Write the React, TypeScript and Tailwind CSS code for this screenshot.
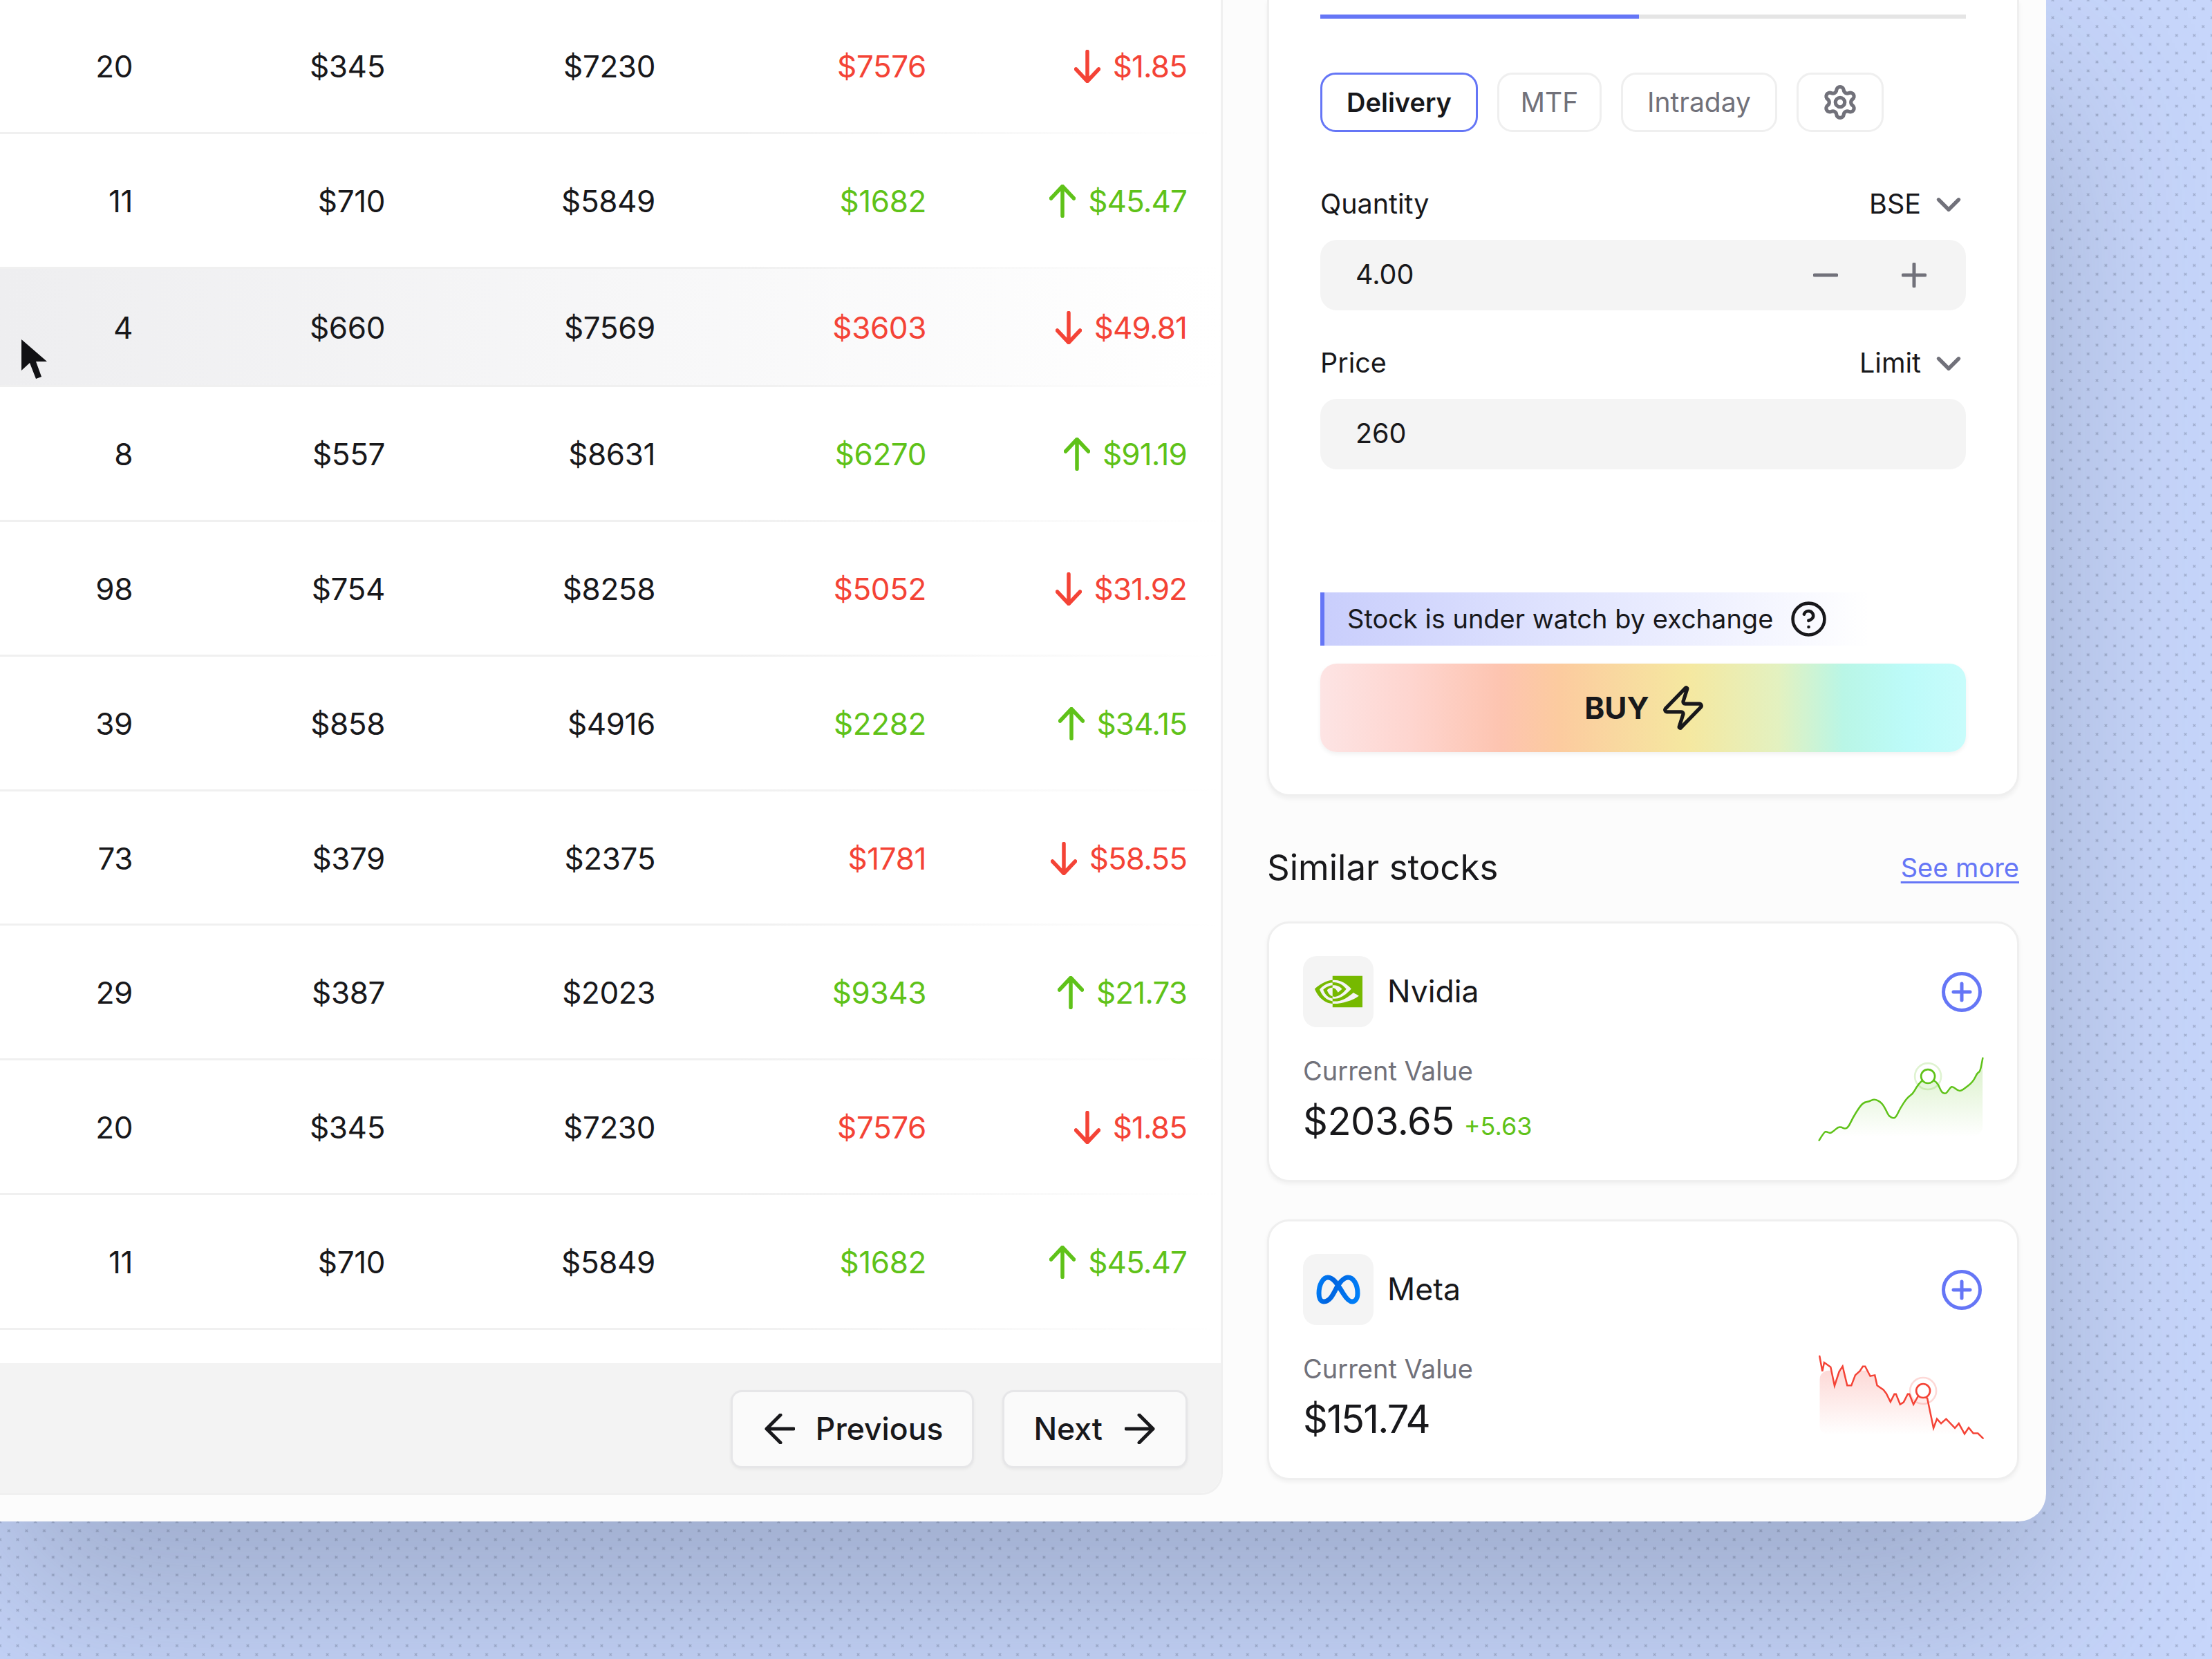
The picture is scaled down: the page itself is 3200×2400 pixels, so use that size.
import React from "react";
import { ChevronDown, CircleHelp, Settings, Zap } from "lucide-react";
import { SiNvidia } from "react-icons/si";

const rows = [
  { qty: "20", a: "$345", b: "$7230", c: "$7576", d: "$1.85", up: false, cls: "h-[194px]" },
  { qty: "11", a: "$710", b: "$5849", c: "$1682", d: "$45.47", up: true, cls: "h-[194.9px]" },
  { qty: "4", a: "$660", b: "$7569", c: "$3603", d: "$49.81", up: false, cls: "h-[171px] bg-gradient-to-r from-[#eeeef0] to-white" },
  { qty: "8", a: "$557", b: "$8631", c: "$6270", d: "$91.19", up: true, cls: "h-[194.9px]" },
  { qty: "98", a: "$754", b: "$8258", c: "$5052", d: "$31.92", up: false, cls: "h-[194.9px]" },
  { qty: "39", a: "$858", b: "$4916", c: "$2282", d: "$34.15", up: true, cls: "h-[194.9px]" },
  { qty: "73", a: "$379", b: "$2375", c: "$1781", d: "$58.55", up: false, cls: "h-[194.9px]" },
  { qty: "29", a: "$387", b: "$2023", c: "$9343", d: "$21.73", up: true, cls: "h-[194.9px]" },
  { qty: "20", a: "$345", b: "$7230", c: "$7576", d: "$1.85", up: false, cls: "h-[194.9px]" },
  { qty: "11", a: "$710", b: "$5849", c: "$1682", d: "$45.47", up: true, cls: "h-[194.9px]" },
];

const greenLine = [
  [218, 514], [240, 478], [250, 476], [265, 484], [280, 475], [300, 457], [315, 457], [330, 465], [345, 457],
  [365, 415], [390, 375], [410, 350], [435, 346], [458, 334], [490, 350], [510, 385], [520, 408], [540, 419],
  [553, 412], [570, 375], [600, 330], [625, 312], [640, 285], [660, 258], [690, 240], [720, 255], [735, 270],
  [750, 305], [765, 312], [775, 305], [790, 282], [800, 281], [820, 297], [835, 300], [855, 285], [875, 270],
  [892, 250], [905, 222], [918, 215], [929, 157],
];

const redLine = [
  [220, 128], [232, 193], [240, 155], [268, 175], [285, 256], [305, 195], [320, 172], [340, 255], [358, 255],
  [375, 210], [395, 192], [408, 172], [418, 172], [440, 214], [460, 210], [470, 255], [497, 273], [510, 290],
  [528, 326], [545, 292], [552, 292], [570, 337], [585, 328], [603, 292], [610, 292], [628, 337], [650, 298],
  [688, 310], [715, 440], [730, 400], [748, 420], [770, 400], [808, 440], [825, 420], [850, 465], [868, 438],
  [888, 463], [908, 463], [930, 484],
];

// rounds the corners between the sampled points
const smooth = (pts: number[][]) => {
  let d = `M${pts[0][0]} ${pts[0][1]}`;
  for (let i = 1; i < pts.length - 1; i++) {
    const mx = (pts[i][0] + pts[i + 1][0]) / 2;
    const my = (pts[i][1] + pts[i + 1][1]) / 2;
    d += ` Q${pts[i][0]} ${pts[i][1]} ${mx} ${my}`;
  }
  const last = pts[pts.length - 1];
  return d + ` L${last[0]} ${last[1]}`;
};

const straight = (pts: number[][]) => "M" + pts.map((p) => p.join(" ")).join(" L");

const GreenChart = () => {
  const line = smooth(greenLine);
  return (
    <svg viewBox="210 140 730 390" className="-mr-[5px] h-[130px] w-[243px]" fill="none">
      <defs>
        <linearGradient id="greenFill" x1="0" y1="215" x2="0" y2="500" gradientUnits="userSpaceOnUse">
          <stop offset="0" stopColor="#5fc219" stopOpacity="0.2" />
          <stop offset="1" stopColor="#5fc219" stopOpacity="0" />
        </linearGradient>
        <clipPath id="greenClip">
          <rect x="218" y="150" width="711" height="350" rx="50" />
        </clipPath>
      </defs>
      <path d={`${line} L929 500 L218 500 Z`} fill="url(#greenFill)" clipPath="url(#greenClip)" />
      <path d={line} stroke="#5fc219" strokeWidth="7.5" strokeLinecap="round" strokeLinejoin="round" />
      <circle cx="691" cy="236" r="57" stroke="#5fc219" strokeOpacity="0.2" strokeWidth="8" />
      <circle cx="691" cy="236" r="30" fill="white" stroke="#5fc219" strokeWidth="8" />
    </svg>
  );
};

const RedChart = () => {
  const line = straight(redLine);
  return (
    <svg viewBox="210 110 730 390" className="-mr-[5px] h-[130px] w-[243px]" fill="none">
      <defs>
        <linearGradient id="redFill" x1="0" y1="190" x2="0" y2="470" gradientUnits="userSpaceOnUse">
          <stop offset="0" stopColor="#f44336" stopOpacity="0.2" />
          <stop offset="1" stopColor="#f44336" stopOpacity="0" />
        </linearGradient>
        <clipPath id="redClip">
          <rect x="220" y="190" width="711" height="280" rx="40" />
        </clipPath>
      </defs>
      <path d={`${line} L930 470 L220 470 Z`} fill="url(#redFill)" clipPath="url(#redClip)" />
      <path d={line} stroke="#f44336" strokeWidth="7.5" strokeLinecap="round" strokeLinejoin="miter" />
      <circle cx="670" cy="278" r="57" stroke="#f44336" strokeOpacity="0.2" strokeWidth="8" />
      <circle cx="670" cy="278" r="30" fill="white" stroke="#f44336" strokeWidth="8" />
    </svg>
  );
};

const MetaLogo = () => (
  <svg viewBox="0 0 66 44" className="h-[44px] w-[66px]" fill="none">
    <defs>
      <linearGradient id="metaBlue" x1="0" y1="10" x2="66" y2="30" gradientUnits="userSpaceOnUse">
        <stop offset="0" stopColor="#0082fb" />
        <stop offset="0.35" stopColor="#0064e0" />
        <stop offset="1" stopColor="#0082fb" />
      </linearGradient>
    </defs>
    <path
      d="M5 27C5 14 11 4 18 4C26 4 32 14 40 27C45 35 49 39 53 39C58 39 61 34 61 27C61 14 55 4 47 4C41 4 36 10 31 18C26 28 21 39 12 39C7 39 5 33 5 27Z"
      stroke="url(#metaBlue)"
      strokeWidth="7"
    />
  </svg>
);

const Arrow = ({ up }: { up: boolean }) => (
  <svg
    viewBox="0 0 38 48"
    className={`h-[48px] w-[38px] ${up ? "rotate-180 text-[#5fc219]" : "text-[#f44336]"}`}
    fill="none"
    stroke="currentColor"
    strokeWidth="5.5"
    strokeLinecap="round"
    strokeLinejoin="round"
  >
    <path d="M19 2.5V45.5M2.5 28L19 45.5L35.5 28" />
  </svg>
);

const PlusButton = () => (
  <svg viewBox="0 0 58 58" className="h-[58px] w-[58px]" fill="none" stroke="#6576f6" strokeWidth="5" strokeLinecap="round">
    <circle cx="29" cy="29" r="26.5" />
    <path d="M29 17V41M17 29H41" />
  </svg>
);

const tabBase = "flex h-[86px] items-center justify-center rounded-[22px] border-[3px] bg-white";

const StockCard = ({ name, logo, value, valueCls, change, chart }: { name: string; logo: React.ReactNode; value: string; valueCls: string; change?: string; chart: React.ReactNode }) => (
  <div className="h-[377px] rounded-[32px] border-[3px] border-[#efefef] bg-white pt-[47px] pr-[51px] pl-[49px] shadow-[0_3px_6px_rgba(0,0,0,0.05)]">
    <div className="flex items-center justify-between">
      <div className="flex items-center gap-[20px]">
        <div className="flex h-[103px] w-[102px] items-center justify-center rounded-[20px] bg-[#f4f4f4]">{logo}</div>
        <span className="text-[44.5px] text-[#18181b]">{name}</span>
      </div>
      <PlusButton />
    </div>
    <div className="mt-[39px] flex items-start justify-between">
      <div>
        <div className="h-[48px] text-[38px] leading-[48px] text-[#71717a]">Current Value</div>
        <div className="mt-[14px] flex items-baseline gap-[14px]">
          <span className={`text-[56px] leading-[70px] text-[#18181b] ${valueCls}`}>{value}</span>
          {change && <span className="text-[36px] text-[#5fc219]">{change}</span>}
        </div>
      </div>
      {chart}
    </div>
  </div>
);

export default function App() {
  return (
    <div className="relative h-[2400px] w-[3200px] overflow-hidden bg-[#c7d6fb] font-['Inter',sans-serif] text-[#18181b]">
      {/* x pattern behind everything */}
      <svg className="absolute inset-0 h-full w-full">
        <defs>
          <pattern id="xs" x="-6.4" y="-6.4" width="25.6" height="25.6" patternUnits="userSpaceOnUse">
            <path d="M4.6 4.6L8.2 8.2M8.2 4.6L4.6 8.2M17.4 17.4L21 21M21 17.4L17.4 21" stroke="#6b7690" strokeOpacity="0.45" strokeWidth="1.3" />
          </pattern>
        </defs>
        <rect width="100%" height="100%" fill="url(#xs)" />
      </svg>

      <div className="relative flex h-[2201px] w-[2960px] rounded-br-[40px] bg-[#fcfcfc] shadow-[0_120px_280px_rgba(60,70,90,0.3)]">
        {/* table panel */}
        <div className="flex h-[2163px] w-[1769px] shrink-0 flex-col overflow-hidden rounded-br-[32px] border-r-[3px] border-b-[3px] border-[#f0f0f0] bg-white">
          <div className="h-[1972px] text-[44px] tracking-[-0.4px]">
            {rows.map((r, i) => (
              <div key={i} className={`flex flex-col ${r.cls}`}>
                <div className={`grid flex-1 grid-cols-[192px_365px_391px_392px_377px] items-center text-right ${i === 0 ? "pt-0" : "pt-[2px]"}`}>
                  <span>{r.qty}</span>
                  <span>{r.a}</span>
                  <span>{r.b}</span>
                  <span className={r.up ? "text-[#5fc219]" : "text-[#f44336]"}>{r.c}</span>
                  <span className={`flex items-center justify-end gap-[18px] tracking-[-0.9px] ${r.up ? "text-[#5fc219]" : "text-[#f44336]"}`}>
                    <Arrow up={r.up} />
                    {r.d}
                  </span>
                </div>
                <div className="h-[3px] bg-gradient-to-r from-[#f0f0f0] from-60% to-white" />
              </div>
            ))}
          </div>
          <div className="flex flex-1 items-center justify-end gap-[41px] bg-[#f3f3f3] pt-[2px] pr-[48px]">
            <button className="flex h-[113px] items-center gap-[30px] rounded-[16px] border-[3px] border-[#e6e6e8] bg-[#fafafa] pr-[42px] pl-[46px] text-[44.5px] font-medium shadow-[0_2px_4px_rgba(0,0,0,0.05)]">
              <svg viewBox="0 0 44 44" className="h-[44px] w-[44px]" fill="none" stroke="#18181b" strokeWidth="5" strokeLinecap="round" strokeLinejoin="round">
                <path d="M42 22H3M23 2L3 22L23 42" />
              </svg>
              Previous
            </button>
            <button className="flex h-[113px] items-center gap-[32px] rounded-[16px] border-[3px] border-[#e6e6e8] bg-[#fafafa] pr-[44px] pl-[42px] text-[44.5px] font-medium shadow-[0_2px_4px_rgba(0,0,0,0.05)]">
              Next
              <svg viewBox="0 0 44 44" className="h-[44px] w-[44px]" fill="none" stroke="#18181b" strokeWidth="5" strokeLinecap="round" strokeLinejoin="round">
                <path d="M2 22H41M21 2L41 22L21 42" />
              </svg>
            </button>
          </div>
        </div>

        {/* right column */}
        <div className="ml-[64px] w-[1088px] shrink-0">
          <div className="h-[1152px] rounded-b-[32px] border-x-[3px] border-b-[3px] border-[#efefef] bg-white px-[74px] pt-[21px] shadow-[0_4px_6px_rgba(0,0,0,0.05)]">
            <div className="h-[6px] bg-[#e5e5e5]">
              <div className="h-full w-[461px] bg-[#6576f6]" />
            </div>
            <div className="mt-[78px] flex gap-[28px]">
              <div className={`${tabBase} w-[228px] border-[#6576f6] text-[38px] font-semibold text-[#18181b]`}>Delivery</div>
              <div className={`${tabBase} w-[151px] border-[#efefef] text-[39px] text-[#71717a]`}>MTF</div>
              <div className={`${tabBase} w-[226px] border-[#efefef] text-[39px] text-[#71717a]`}>Intraday</div>
              <div className={`${tabBase} w-[126px] border-[#efefef]`}>
                <Settings size={54} strokeWidth={2.3} color="#71717a" />
              </div>
            </div>

            <div className="mt-[81px] flex h-[48px] items-center justify-between text-[39.5px]">
              <span>Quantity</span>
              <span className="flex items-center gap-[25px] pr-[11px]">
                BSE
                <ChevronDown size={58} strokeWidth={2.2} color="#71717a" className="-mx-[14.5px]" />
              </span>
            </div>
            <div className="mt-[27px] flex h-[102px] items-center justify-between rounded-[24px] bg-[#f4f4f4] pr-[57px] pl-[51px] text-[39.5px]">
              <span>4.00</span>
              <span className="flex items-center gap-[92px]">
                <svg viewBox="0 0 36 36" className="h-[36px] w-[36px]" fill="none" stroke="#71717a" strokeWidth="5" strokeLinecap="round">
                  <path d="M2 18H34" />
                </svg>
                <svg viewBox="0 0 36 36" className="h-[36px] w-[36px]" fill="none" stroke="#71717a" strokeWidth="5" strokeLinecap="round">
                  <path d="M2 18H34M18 2V34" />
                </svg>
              </span>
            </div>

            <div className="mt-[53px] flex h-[48px] items-center justify-between text-[39.5px]">
              <span>Price</span>
              <span className="flex items-center gap-[25px] pr-[11px]">
                Limit
                <ChevronDown size={58} strokeWidth={2.2} color="#71717a" className="-mx-[14.5px]" />
              </span>
            </div>
            <div className="mt-[27px] flex h-[102px] items-center rounded-[24px] bg-[#f4f4f4] pl-[51px] text-[39.5px]">260</div>

            <div className="mt-[178px] flex h-[77px] w-[794px] items-center gap-[24px] border-l-[6px] border-[#6576f6] bg-gradient-to-r from-[#c9cefc] to-white pl-[33px] text-[38px]">
              <span>Stock is under watch by exchange</span>
              <CircleHelp size={55} strokeWidth={2} color="#18181b" />
            </div>

            <button className="mt-[26px] flex h-[128px] w-full items-center justify-center gap-[14px] rounded-[24px] bg-[linear-gradient(90deg,#fde4e4_0%,#fed5cf_14%,#fdc4b0_28%,#fccb9f_37%,#f5e8a0_57%,#e3f1c0_71%,#b9f6e6_81%,#bcfbf9_91%,#c8fcfb_100%)] pl-[8px] text-[44px] font-bold shadow-[0_3px_6px_rgba(0,0,0,0.06)]">
              BUY
              <Zap size={70} strokeWidth={1.8} color="#18181b" />
            </button>
          </div>

          <div className="mt-[73px] flex h-[60px] items-center justify-between">
            <span className="text-[51px]">Similar stocks</span>
            <span className="text-[38px] text-[#6576f6] underline underline-offset-[6px]">See more</span>
          </div>

          <div className="mt-[48px]">
            <StockCard name="Nvidia" logo={<SiNvidia size={69} color="#76b900" />} value="$203.65" valueCls="tracking-[-0.5px]" change="+5.63" chart={<GreenChart />} />
          </div>
          <div className="mt-[54px]">
            <StockCard name="Meta" logo={<MetaLogo />} value="$151.74" valueCls="tracking-[-1.8px]" chart={<RedChart />} />
          </div>
        </div>
      </div>

      {/* mouse pointer left in the shot */}
      <svg viewBox="0 0 38 58" className="absolute top-[491px] left-[31px] h-[58px] w-[38px]" fill="#111114">
        <path d="M0 0V45L12 34L21 57L29 54L21 32H37Z" />
      </svg>
    </div>
  );
}
